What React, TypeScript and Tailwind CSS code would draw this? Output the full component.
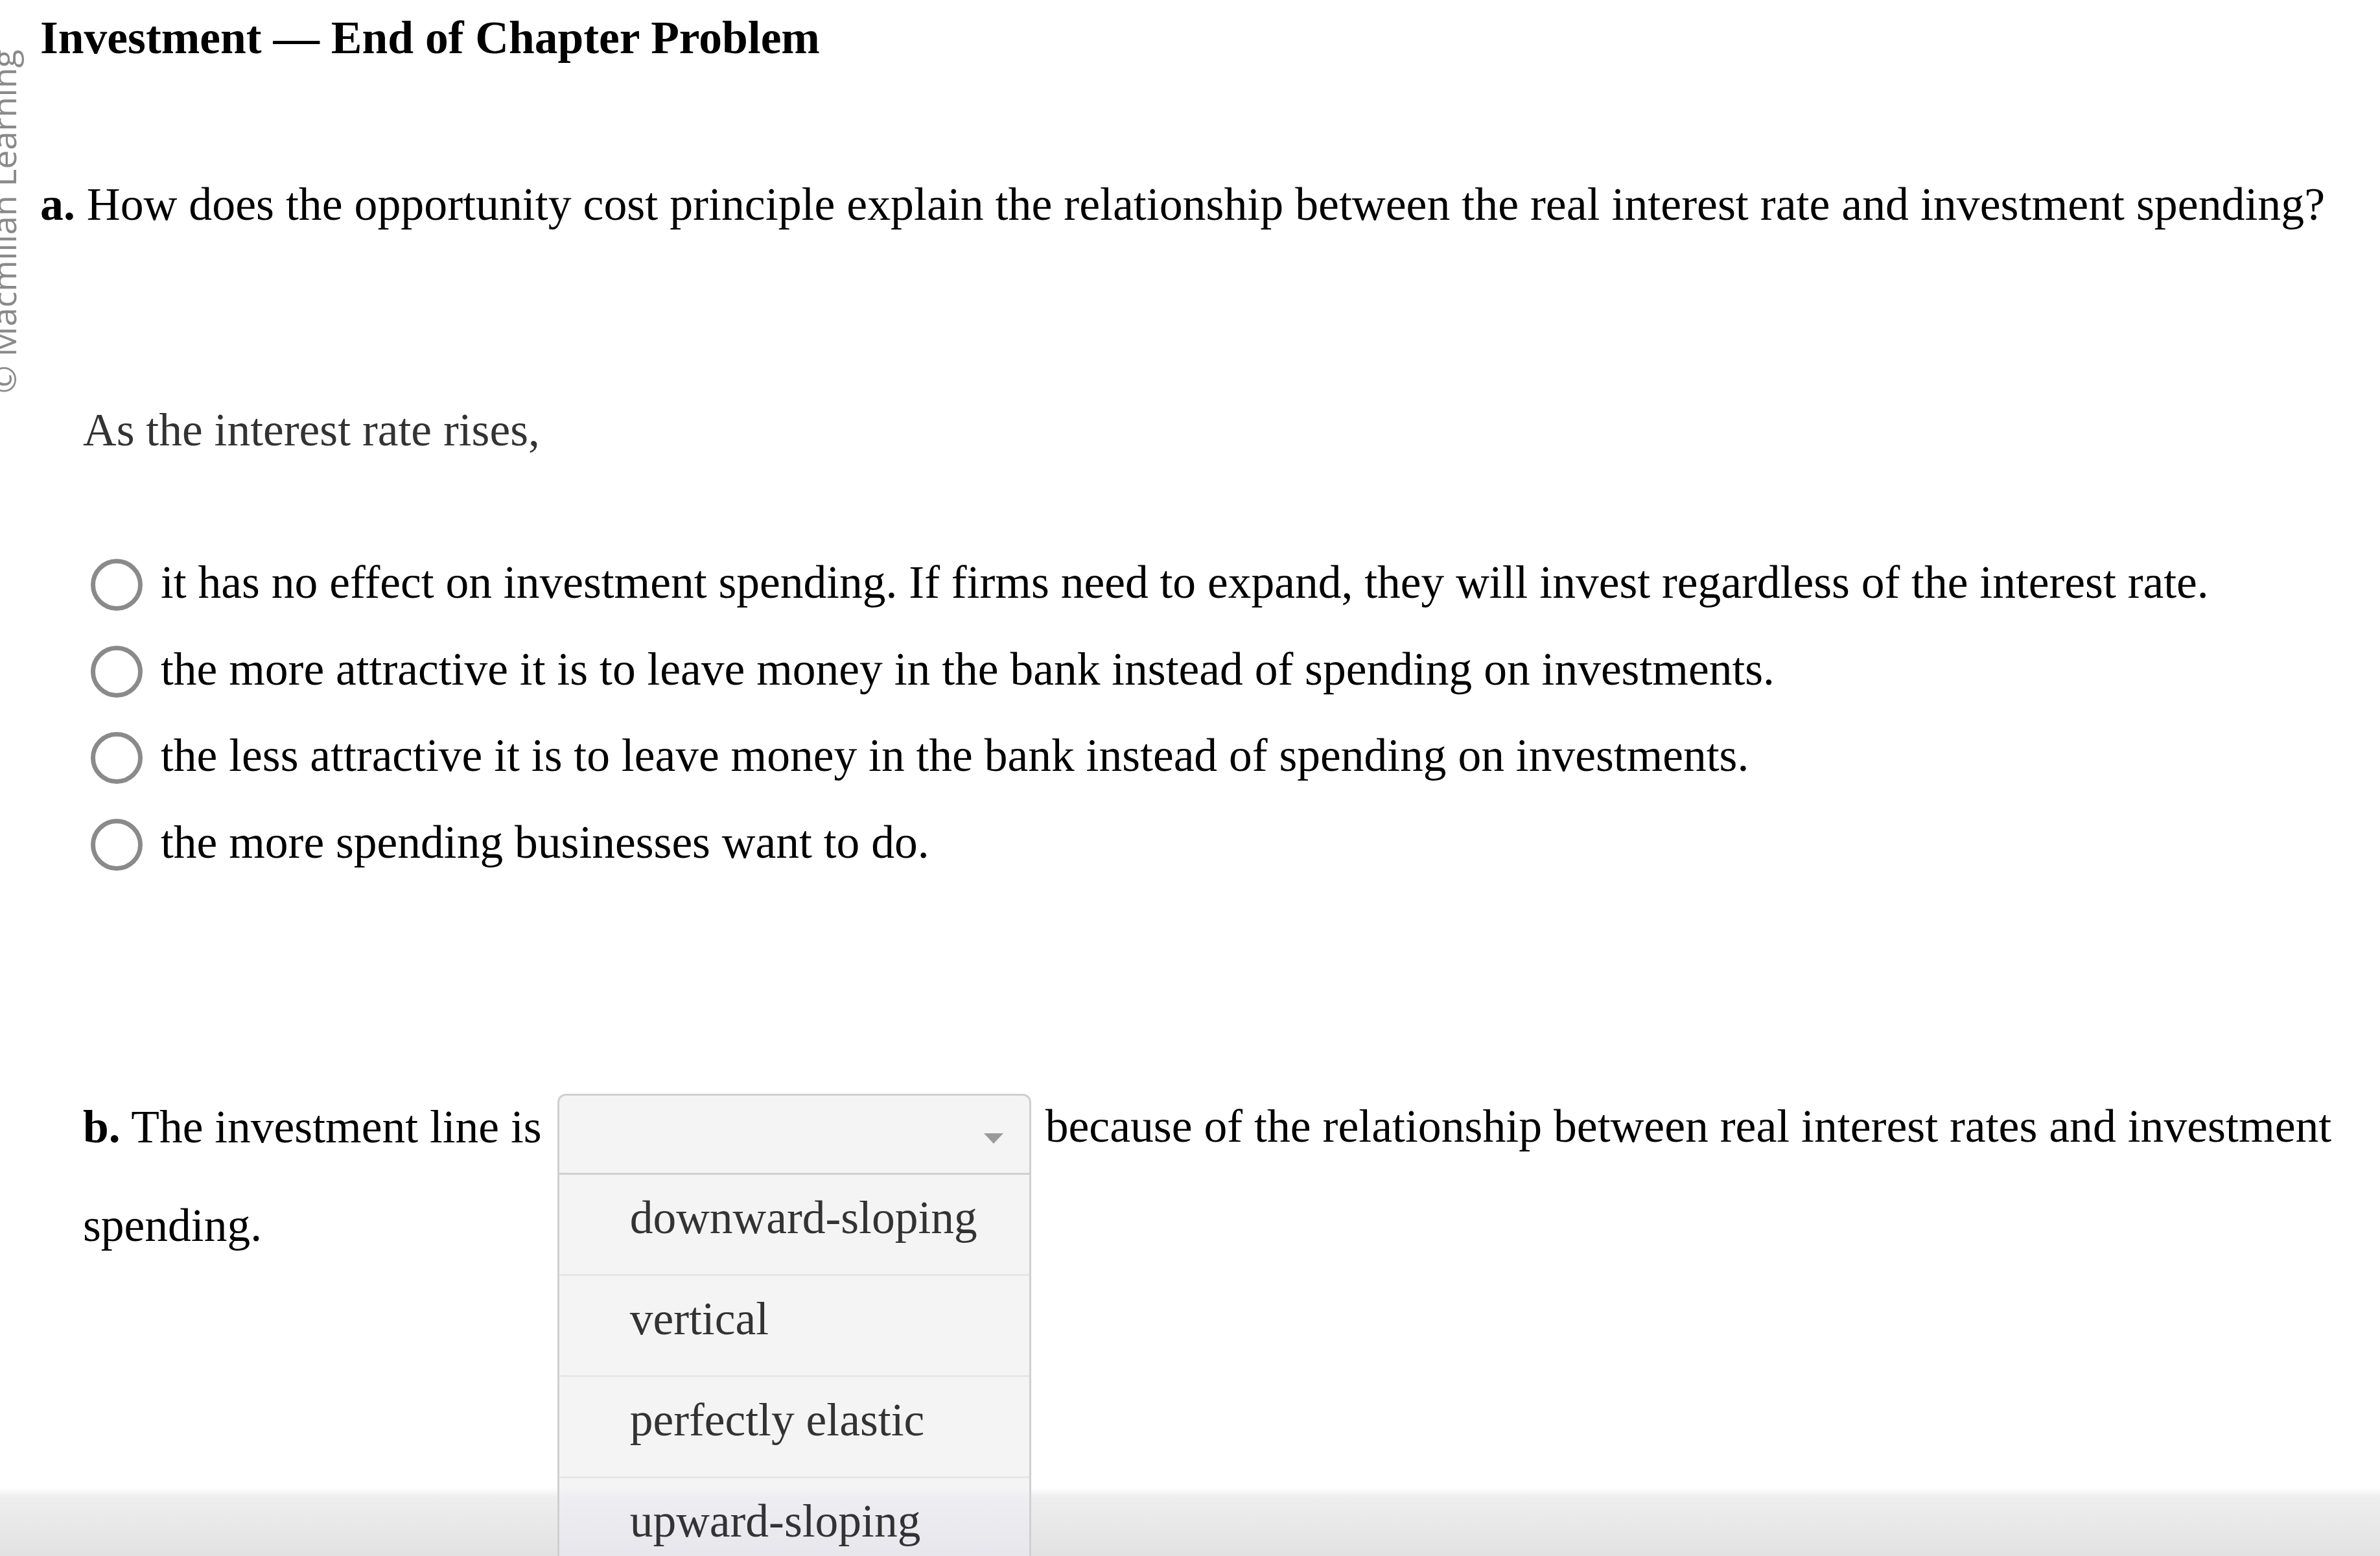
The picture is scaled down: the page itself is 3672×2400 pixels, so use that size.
import React from "react";

const options = [
  "it has no effect on investment spending. If firms need to expand, they will invest regardless of the interest rate.",
  "the more attractive it is to leave money in the bank instead of spending on investments.",
  "the less attractive it is to leave money in the bank instead of spending on investments.",
  "the more spending businesses want to do.",
];

const menuItems = ["downward-sloping", "vertical", "perfectly elastic"];

export default function App() {
  return (
    <div className="relative w-[3672px] h-[2400px] overflow-hidden bg-white font-['Liberation_Serif',serif] text-black">
      {/* vertical watermark */}
      <div className="absolute left-[-21px] top-[607px] origin-top-left -rotate-90 whitespace-nowrap font-['Open_Sans',sans-serif] text-[52px] leading-[52px] text-[#8a8a8a]">
        © Macmillan Learning
      </div>

      <div className="flex flex-col pt-[22px]">
        <h1 className="pl-[62px] text-[71.5px] leading-[71.5px] font-bold">
          Investment — End of Chapter Problem
        </h1>

        <p className="mt-[186.5px] pl-[62px] text-[71.8px] leading-[71.5px]">
          <span className="font-bold">a.</span> How does the opportunity cost principle explain the relationship between the real interest rate and investment spending?
        </p>

        <p className="mt-[275.5px] pl-[128px] text-[71.5px] leading-[71.5px] text-[#333333]">
          As the interest rate rises,
        </p>

        <div className="mt-[163.5px] flex flex-col pl-[140px]">
          {options.map((o) => (
            <label key={o} className="flex h-[133.5px] items-start gap-[28px]">
              <span className="box-border h-[80px] w-[80px] shrink-0 rounded-full border-[7px] border-[#8a8a8a] bg-white" />
              <span className="text-[71.5px] leading-[71.5px]">{o}</span>
            </label>
          ))}
        </div>

        <div className="mt-[291px] flex items-start pl-[128px] text-[71.5px] leading-[71.5px]">
          <span className="mt-[15px] whitespace-nowrap">
            <span className="font-bold">b.</span> The investment line is
          </span>
          <div className="relative ml-[24px] w-[731px] shrink-0">
            <div className="box-border flex h-[125px] items-center justify-end rounded-t-[13px] border-[3px] border-[#d0d0d0] bg-[#f4f4f4] pr-[40px]">
              <svg width="30" height="16" viewBox="0 0 30 16" className="mt-[12px]">
                <polygon points="0,0 30,0 15,16" fill="#9a9a9a" />
              </svg>
            </div>
            <div className="absolute left-0 top-full z-10 box-border w-full border-x-[3px] border-[#d0d0d0] bg-[#f4f4f4]">
              {menuItems.map((m) => (
                <div
                  key={m}
                  className="box-border h-[156px] border-b-[3px] border-[#e6e6e6] pl-[109px] pt-[30px] text-[#333333]"
                >
                  {m}
                </div>
              ))}
              <div className="box-border h-[156px] bg-linear-to-b from-[#f4f4f4] from-10% via-[#ededf2] via-20% to-[#e4e4ea] pl-[109px] pt-[30px] text-[#333333]">
                upward-sloping
              </div>
            </div>
          </div>
          <span className="ml-[22px] mt-[15px] whitespace-nowrap text-[71.7px]">
            because of the relationship between real interest rates and investment
          </span>
        </div>

        <p className="mt-[42px] pl-[128px] text-[71.5px] leading-[71.5px]">spending.</p>
      </div>

      {/* bottom browser bar overlay */}
      <div className="pointer-events-none absolute bottom-0 left-0 h-[106px] w-full bg-linear-to-b from-white/0 from-0% via-[#eeeeee] via-15% to-[#e2e2e2]" />
    </div>
  );
}
